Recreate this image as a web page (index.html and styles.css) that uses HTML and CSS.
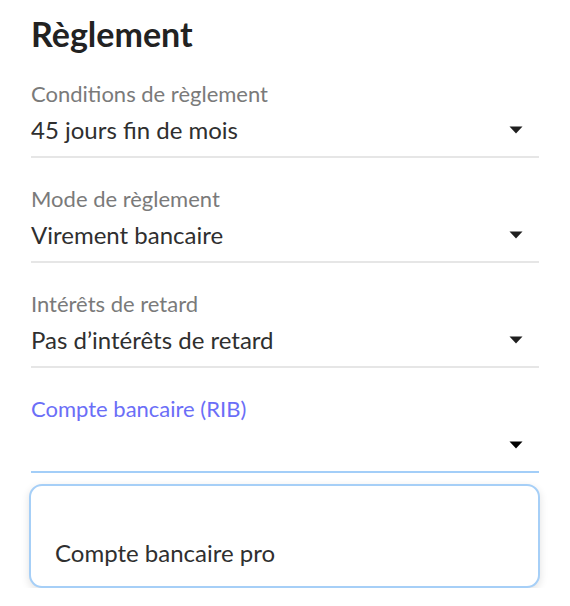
FILE: index.html
```html
<!DOCTYPE html>
<html lang="fr">
<head>
<meta charset="utf-8">
<title>Règlement</title>
<link rel="stylesheet" href="styles.css">
</head>
<body>
<main class="panel">
  <h1 class="title">Règlement</h1>

  <div class="field">
    <div class="label">Conditions de règlement</div>
    <div class="select">
      <span class="value">45 jours fin de mois</span>
      <svg class="caret" width="14" height="8" viewBox="0 0 14 8"><path d="M0.5 0.5H13.5L7 7.5Z" fill="#1f1f1f"/></svg>
    </div>
  </div>

  <div class="field">
    <div class="label">Mode de règlement</div>
    <div class="select">
      <span class="value">Virement bancaire</span>
      <svg class="caret" width="14" height="8" viewBox="0 0 14 8"><path d="M0.5 0.5H13.5L7 7.5Z" fill="#1f1f1f"/></svg>
    </div>
  </div>

  <div class="field">
    <div class="label">Intérêts de retard</div>
    <div class="select">
      <span class="value">Pas d’intérêts de retard</span>
      <svg class="caret" width="14" height="8" viewBox="0 0 14 8"><path d="M0.5 0.5H13.5L7 7.5Z" fill="#1f1f1f"/></svg>
    </div>
  </div>

  <div class="field field-focused">
    <div class="label">Compte bancaire (RIB)</div>
    <div class="select">
      <span class="value"></span>
      <svg class="caret" width="14" height="8" viewBox="0 0 14 8"><path d="M0.5 0.5H13.5L7 7.5Z" fill="#000"/></svg>
    </div>
  </div>

  <ul class="menu">
    <li class="option option-empty"></li>
    <li class="option">Compte bancaire pro</li>
  </ul>
</main>
</body>
</html>
```

FILE: styles.css
```css
html, body {
  margin: 0;
  padding: 0;
  background: #ffffff;
}

body {
  font-family: "Lato", "Noto Sans", sans-serif;
  color: #303030;
}

.panel {
  width: 508px;
  padding: 14px 0 0 31px;
}

.title {
  margin: 0 0 28px 0;
  font-size: 34px;
  line-height: 40px;
  font-weight: 700;
  color: #222222;
}

.field {
  display: flex;
  flex-direction: column;
  gap: 12px;
  padding-bottom: 14px;
  border-bottom: 2px solid #e6e6e6;
  margin-bottom: 29px;
}

.label {
  font-size: 22px;
  line-height: 24px;
  color: #7a7a7a;
}

.select {
  display: flex;
  align-items: center;
  justify-content: space-between;
  height: 24px;
}

.value {
  font-size: 24px;
  line-height: 24px;
  color: #2f2f2f;
}

.caret {
  margin-right: 16px;
  display: block;
}

.field-focused {
  border-bottom-color: #a3cef8;
  margin-bottom: 11px;
}

.field-focused .label {
  color: #6b6ef7;
}

.menu {
  list-style: none;
  margin: 0 -1px 0 -2px;
  padding: 8px 0;
  border: 2px solid #a6cff7;
  border-radius: 13px;
  box-shadow: 0 3px 8px rgba(0, 0, 0, 0.12);
  background: #ffffff;
}

.option {
  padding: 10px 24px 13px;
  font-size: 24px;
  line-height: 24px;
  color: #2f2f2f;
}

.option-empty {
  height: 37px;
  padding: 0;
}
```
